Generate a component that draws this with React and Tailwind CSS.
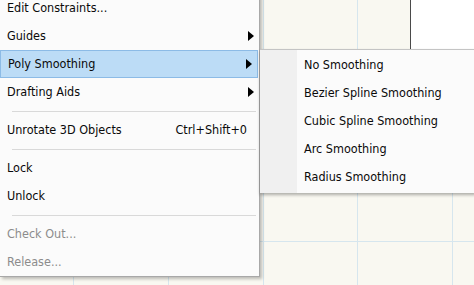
import React from 'react';

const font = { fontFamily: '"DejaVu Sans Condensed", "DejaVu Sans", sans-serif' };

const mainItems = [
    { label: 'Edit Constraints...' },
    { label: 'Guides', sub: true },
    { label: 'Poly Smoothing', sub: true, active: true },
    { label: 'Drafting Aids', sub: true },
    { sep: true },
    { label: 'Unrotate 3D Objects', shortcut: 'Ctrl+Shift+0' },
    { sep: true },
    { label: 'Lock' },
    { label: 'Unlock' },
    { sep: true },
    { label: 'Check Out...', disabled: true },
    { label: 'Release...', disabled: true },
];

const subItems = ['No Smoothing', 'Bezier Spline Smoothing', 'Cubic Spline Smoothing', 'Arc Smoothing', 'Radius Smoothing'];

function Arrow() {
    return (
        <svg width="6" height="10" viewBox="0 0 6 10" className="shrink-0">
            <path d="M0 0 L6 5 L0 10 Z" fill="#000" />
        </svg>
    );
}

function Canvas() {
    const xs = [73, 168, 263, 357, 452];
    const ys = [51, 146, 241];
    return (
        <svg className="absolute inset-0" width="474" height="285">
            <rect width="474" height="285" fill="#f9f8f1" />
            {xs.map((x) => <line key={x} x1={x + 0.5} y1="0" x2={x + 0.5} y2="285" stroke="#d6e6ee" />)}
            {ys.map((y) => <line key={y} x1="0" y1={y + 0.5} x2="474" y2={y + 0.5} stroke="#d6e6ee" />)}
            <rect x="411" y="0" width="63" height="49" fill="#ffffff" />
            <line x1="410.5" y1="0" x2="410.5" y2="49" stroke="#4a4a4a" />
        </svg>
    );
}

export default function App() {
    return (
        <div className="relative w-[474px] h-[285px] overflow-hidden text-[12.5px]" style={font}>
            <Canvas />

            <div className="absolute left-0 top-[-6px] w-[260px] bg-[#fbfbfb] border-r border-b border-[#a8a8a8] shadow-[2px_2px_3px_rgba(0,0,0,0.25)]">
                {mainItems.map((it, i) =>
                    it.sep ? (
                        <div key={i} className="h-[10px] flex items-center pl-3 pr-[3px]">
                            <div className="h-px w-full bg-[#d9d9d9]" />
                        </div>
                    ) : (
                        <div
                            key={i}
                            className={
                                'h-[28px] flex items-center pl-[7px] pr-[5px] ' +
                                (it.active ? 'bg-[#bcdcf6] border border-[#8cbbe6] pl-[6px] pr-[4px] mr-[1px]' : '')
                            }
                        >
                            <span className={'flex-1 ' + (it.disabled ? 'text-[#8c8c8c]' : 'text-[#0a0a0a]')}>{it.label}</span>
                            {it.shortcut && <span className="text-[#0a0a0a] mr-[7px]">{it.shortcut}</span>}
                            {it.sub && <Arrow />}
                        </div>
                    )
                )}
            </div>

            <div className="absolute left-[260px] top-[49px] w-[216px] flex bg-[#fbfbfb] border-t border-[#c4c4c4] shadow-[0_2px_3px_rgba(0,0,0,0.3)]">
                <div className="w-[37px] bg-[#f0f0f0]" />
                <div className="flex-1 pl-[7px] pt-px pb-[2px]">
                    {subItems.map((s) => (
                        <div key={s} className="h-[28px] flex items-center text-[#0a0a0a]">{s}</div>
                    ))}
                </div>
            </div>
        </div>
    );
}
